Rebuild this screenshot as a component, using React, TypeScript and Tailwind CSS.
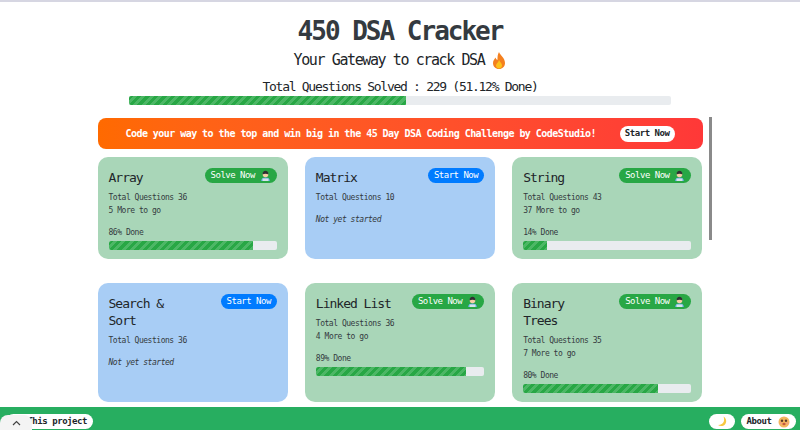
import React from "react";

const mono = "font-['DejaVu_Sans_Mono','Liberation_Mono',monospace]";
const stripes =
  "bg-[repeating-linear-gradient(135deg,#28a745_0px,#28a745_3px,#4cb765_3px,#4cb765_6px)]";

const Fire = () => (
  <svg width="14" height="17" viewBox="0 0 14 17" className="inline-block">
    <path d="M7 0C8 3 13 6 13 11C13 14.500 10.500 17 7 17C3.500 17 1 14.500 1 11C1 8.500 2.500 7 3.500 5.500C4 7 4.500 7.500 5.500 8C5.500 5 5.500 2.500 7 0Z" fill="#f4801f" />
    <path d="M7 8C8 10 10 11.500 10 13.500C10 15.500 8.500 16.500 7 16.500C5.500 16.500 4 15.500 4 13.500C4 11.500 6.500 10.500 7 8Z" fill="#fcc21b" />
  </svg>
);

const Coder = () => (
  <svg width="11" height="11" viewBox="0 0 11 11" className="inline-block">
    <path d="M1 11C1 8.500 3 7.500 5.500 7.500C8 7.500 10 8.500 10 11Z" fill="#5aa9e0" />
    <circle cx="5.500" cy="4.500" r="2.800" fill="#f6cfa5" />
    <path d="M2.500 4.500C2.500 2 3.800 0.800 5.500 0.800C7.200 0.800 8.500 2 8.500 4.500C7 3.500 4 3.500 2.500 4.500Z" fill="#2f2f33" />
    <rect x="2.500" y="8.500" width="6" height="2.500" fill="#d8e3ea" />
  </svg>
);

const Moon = () => (
  <svg width="11" height="11" viewBox="0 0 11 11">
    <path d="M6.500 0.500C9.500 2.500 10 6 8 8.500C6 10.500 3 10.500 1 9C4 9 6 7.800 6.800 5.500C7.300 4 7.200 2 6.500 0.500Z" fill="#f7c83f" />
  </svg>
);

const Face = () => (
  <svg width="12" height="12" viewBox="0 0 12 12">
    <circle cx="6" cy="6" r="5.500" fill="#f3b65c" />
    <circle cx="4" cy="4.800" r="1.200" fill="#5b3a2a" />
    <circle cx="8" cy="4.800" r="1.200" fill="#5b3a2a" />
    <ellipse cx="6" cy="8" rx="1.600" ry="1.300" fill="#c2573f" />
    <circle cx="2.700" cy="7.300" r="1" fill="#ef9a8a" />
    <circle cx="9.300" cy="7.300" r="1" fill="#ef9a8a" />
  </svg>
);

const Bar = ({ pct, className }: { pct: number; className: string }) => (
  <div className={`bg-[#e9ecef] rounded-[2px] overflow-hidden ${className}`}>
    <div className={`h-full ${stripes}`} style={{ width: `${pct}%` }} />
  </div>
);

type Topic = { name: string; total: number; left?: number; pct?: number };

const TOPICS: Topic[] = [
  { name: "Array", total: 36, left: 5, pct: 86 },
  { name: "Matrix", total: 10 },
  { name: "String", total: 43, left: 37, pct: 14 },
  { name: "Search & Sort", total: 36 },
  { name: "Linked List", total: 36, left: 4, pct: 89 },
  { name: "Binary Trees", total: 35, left: 7, pct: 80 },
];

const TopicCard = ({ t }: { t: Topic }) => {
  const started = t.pct !== undefined;
  return (
    <div className={`rounded-[10px] px-[11px] pt-[11px] pb-[9px] ${started ? "bg-[#a9d6b8]" : "bg-[#a8cdf5]"}`}>
      <div className="flex items-start justify-between">
        <div className="text-[13px] leading-[17px] tracking-[-1px] text-[#212529] mt-[1px] max-w-[78px]">
          {t.name}
        </div>
        {started ? (
          <span className="flex items-center gap-[5px] h-[15px] px-[6px] rounded-full bg-[#28a745] text-white text-[9px] tracking-[-0.5px]">
            Solve Now <Coder />
          </span>
        ) : (
          <span className="flex items-center h-[15px] px-[6px] rounded-full bg-[#007bff] text-white text-[9px] tracking-[-0.5px]">
            Start Now
          </span>
        )}
      </div>
      <div className="mt-[5px] text-[8px] leading-[13px] tracking-[-0.47px] text-[#343a40]">
        Total Questions {t.total}
      </div>
      {started ? (
        <>
          <div className="text-[8px] leading-[13px] tracking-[-0.47px] text-[#343a40]">{t.left} More to go</div>
          <div className="mt-[9px] text-[8px] leading-[13px] tracking-[-0.47px] text-[#343a40]">{t.pct}% Done</div>
          <Bar pct={t.pct!} className="h-[9px] mt-[2px]" />
        </>
      ) : (
        <div className="mt-[9px] text-[8px] leading-[13px] tracking-[-0.47px] italic text-[#343a40]">Not yet started</div>
      )}
    </div>
  );
};

export default function App() {
  return (
    <div className={`relative h-[430px] w-[800px] flex flex-col overflow-hidden bg-white ${mono}`}>
      <div className="h-[2px] bg-[#d6d6e2]" />

      <div className="flex-1 overflow-hidden flex flex-col items-center">
        <h1 className="mt-[13px] text-[26px] leading-[32px] font-bold tracking-[-2px] text-[#343a40]">450 DSA Cracker</h1>
        <div className="mt-[3px] flex items-center gap-[8px] text-[15px] leading-[20px] tracking-[-1.4px] text-[#212529]">
          Your Gateway to crack DSA <Fire />
        </div>
        <div className="mt-[9px] text-[13px] leading-[15px] tracking-[-1.28px] text-[#212529]">
          Total Questions Solved : 229 (51.12% Done)
        </div>
        <Bar pct={51.12} className="w-[542px] h-[9px] mt-[2px]" />

        <div className="mt-[13px] w-[605px] h-[31px] shrink-0 rounded-[8px] bg-gradient-to-r from-[#ff6a00] to-[#ff3838] flex items-center pl-[28px] pr-[28px] justify-between">
          <span className="text-white text-[10px] font-bold tracking-[-0.55px]">
            Code your way to the top and win big in the 45 Day DSA Coding Challenge by CodeStudio!
          </span>
          <span className="h-[16px] px-[5px] rounded-full bg-white text-[#212529] text-[9px] font-bold tracking-[-0.45px] flex items-center">
            Start Now
          </span>
        </div>

        <div className="mt-[8px] w-[605px] grid grid-cols-3 gap-x-[17px] gap-y-[24px]">
          {TOPICS.map((t) => (
            <TopicCard key={t.name} t={t} />
          ))}
        </div>
      </div>

      <footer className="h-[23px] shrink-0 bg-[#27ae60] flex items-center justify-between pl-[6px] pr-[4px] pt-[6px]">
        <span className="h-[15px] w-[87px] rounded-full bg-white text-[9px] font-bold tracking-[-0.45px] text-[#212529] flex items-center justify-end pr-[6px]">
          This project
        </span>
        <div className="flex items-center gap-[6px]">
          <span className="h-[15px] w-[26px] rounded-full bg-white flex items-center justify-center">
            <Moon />
          </span>
          <span className="h-[15px] w-[55px] rounded-full bg-white text-[9px] font-bold tracking-[-0.45px] text-[#212529] flex items-center justify-center gap-[7px]">
            About <Face />
          </span>
        </div>
      </footer>

      {/* back to top tab, sits over the footer */}
      <div className="absolute left-0 bottom-0 w-[32px] h-[15px] bg-[#f4f4f4] rounded-tr-[8px] rounded-tl-[8px] flex items-center justify-center">
        <svg width="9" height="6" viewBox="0 0 9 6" fill="none" stroke="#444" strokeWidth="1.200">
          <path d="M1 5L4.500 1.500L8 5" />
        </svg>
      </div>

      {/* scrollbar thumb */}
      <div className="absolute left-[709px] top-[117px] w-[3px] h-[123px] bg-[#8a8a8a]" />
    </div>
  );
}
